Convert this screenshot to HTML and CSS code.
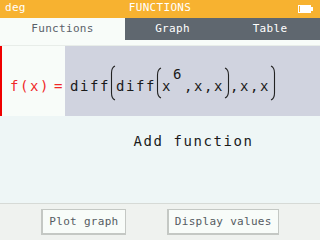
FILE: index.html
```html
<!DOCTYPE html>
<html>
<head>
<meta charset="utf-8">
<link rel="stylesheet" href="styles.css">
</head>
<body>
<div class="screen">
  <header class="titlebar">
    <span class="deg">deg</span>
    <span class="title">FUNCTIONS</span>
    <svg class="battery" width="16" height="8" viewBox="0 0 16 8">
      <rect x="0" y="0" width="13" height="8" fill="#fff"/>
      <rect x="1" y="1" width="1" height="6" fill="#F7B230"/>
      <rect x="13" y="2" width="2" height="4" fill="#fff"/>
    </svg>
  </header>
  <nav class="tabs">
    <div class="tab active">Functions</div>
    <div class="tab">Graph</div>
    <div class="tab">Table</div>
  </nav>
  <div class="list">
    <div class="func-row">
      <div class="func-name">
        <span class="color-bar"></span>
        <span class="fname">f(x)</span><span class="eq">=</span>
      </div>
      <div class="func-expr">
        <span class="t">diff</span>
        <svg class="paren big" width="6" height="36" viewBox="0 0 6 36"><path d="M5 1 Q1.5 2.5 1.5 8 L1.5 28 Q1.5 33.5 5 35" fill="none" stroke="#222" stroke-width="1.1"/></svg>
        <span class="t">diff</span>
        <svg class="paren" width="6" height="32" viewBox="0 0 6 32"><path d="M5 1 Q1.5 2.5 1.5 8 L1.5 24 Q1.5 29.5 5 31" fill="none" stroke="#222" stroke-width="1.1"/></svg>
        <span class="t">x</span><span class="sup">6</span>
        <span class="t">,x,x</span>
        <svg class="paren" width="6" height="32" viewBox="0 0 6 32"><path d="M1 1 Q4.5 2.5 4.5 8 L4.5 24 Q4.5 29.5 1 31" fill="none" stroke="#222" stroke-width="1.1"/></svg>
        <span class="t">,x,x</span>
        <svg class="paren big" width="6" height="36" viewBox="0 0 6 36"><path d="M1 1 Q4.5 2.5 4.5 8 L4.5 28 Q4.5 33.5 1 35" fill="none" stroke="#222" stroke-width="1.1"/></svg>
      </div>
    </div>
    <div class="add-row">
      <span class="add-text">Add function</span>
    </div>
  </div>
  <footer class="buttons">
    <button class="btn">Plot graph</button>
    <button class="btn">Display values</button>
  </footer>
</div>
</body>
</html>
```
FILE: styles.css
```css
html, body {
  margin: 0;
  padding: 0;
}
body {
  width: 320px;
  height: 240px;
  overflow: hidden;
  font-family: "DejaVu Sans Mono", "Liberation Mono", monospace;
}
.screen {
  width: 320px;
  height: 240px;
  display: flex;
  flex-direction: column;
  background: #EEF6F6;
}
.titlebar {
  height: 18px;
  flex: none;
  background: #F7B230;
  color: #fff;
  display: grid;
  grid-template-columns: 1fr auto 1fr;
  align-items: center;
  font-size: 11px;
  line-height: 16px;
  letter-spacing: 0.3px;
}
.deg {
  padding-left: 5px;
  padding-bottom: 2px;
}
.title {
  padding-bottom: 2px;
}
.battery {
  justify-self: end;
  margin-right: 6px;
  margin-bottom: 1px;
}
.tabs {
  height: 22px;
  flex: none;
  display: grid;
  grid-template-columns: 125px 95px 100px;
  background: #5F676F;
}
.tab {
  color: #fff;
  font-size: 11px;
  line-height: 22px;
  letter-spacing: 0.3px;
  text-align: center;
}
.tab.active {
  background: #F8FCF9;
  color: #5A6169;
}
.list {
  flex: 1;
  display: flex;
  flex-direction: column;
  padding-top: 5px;
  background: linear-gradient(#F8FCF9, #F8FCF9) top / 100% 6px no-repeat, #EEF6F6;
}
.func-row {
  height: 70px;
  display: flex;
  border-top: 1px solid #E8EDE9;
}
.func-name {
  width: 65px;
  background: #F8FCF9;
  display: flex;
  align-items: center;
  justify-content: flex-end;
  color: #F02828;
  font-size: 14px;
  letter-spacing: 1.57px;
  line-height: 18px;
  position: relative;
}
.color-bar {
  position: absolute;
  left: 0;
  top: 0;
  bottom: 0;
  width: 2px;
  background: #F00000;
}
.fname {
  margin-top: 10px;
}
.eq {
  margin-top: 10px;
  margin-left: 4px;
  letter-spacing: 0;
  width: 11px;
}
.func-expr {
  flex: 1;
  background: #D0D3DF;
  display: flex;
  align-items: center;
  padding-left: 5px;
  color: #1A1A1A;
  font-size: 14px;
}
.t {
  line-height: 18px;
  letter-spacing: 1.57px;
  margin-top: 10px;
  white-space: pre;
}
.sup {
  line-height: 14px;
  margin-bottom: 15px;
  padding-left: 1px;
  width: 11px;
}
.paren {
  margin-top: 3px;
}
.add-row {
  height: 50px;
  display: flex;
  align-items: center;
  justify-content: center;
  padding-left: 65px;
  font-size: 14px;
  letter-spacing: 1.57px;
  color: #1A1A1A;
}
.add-text {
  margin-left: 2px;
}
.buttons {
  height: 37px;
  flex: none;
  box-sizing: border-box;
  border-top: 1px solid #D6DAD6;
  background: #EFF2EF;
  display: flex;
  justify-content: space-evenly;
  align-items: flex-start;
  padding-top: 5px;
}
.btn {
  height: 26px;
  margin: 0;
  padding: 0 6px;
  background: #F8FCF9;
  border: 1px solid #C4C8C4;
  border-left-width: 2px;
  border-bottom-width: 2px;
  font-family: "DejaVu Sans Mono", "Liberation Mono", monospace;
  font-size: 11px;
  letter-spacing: 0.3px;
  color: #555B62;
  border-radius: 0;
}
```
